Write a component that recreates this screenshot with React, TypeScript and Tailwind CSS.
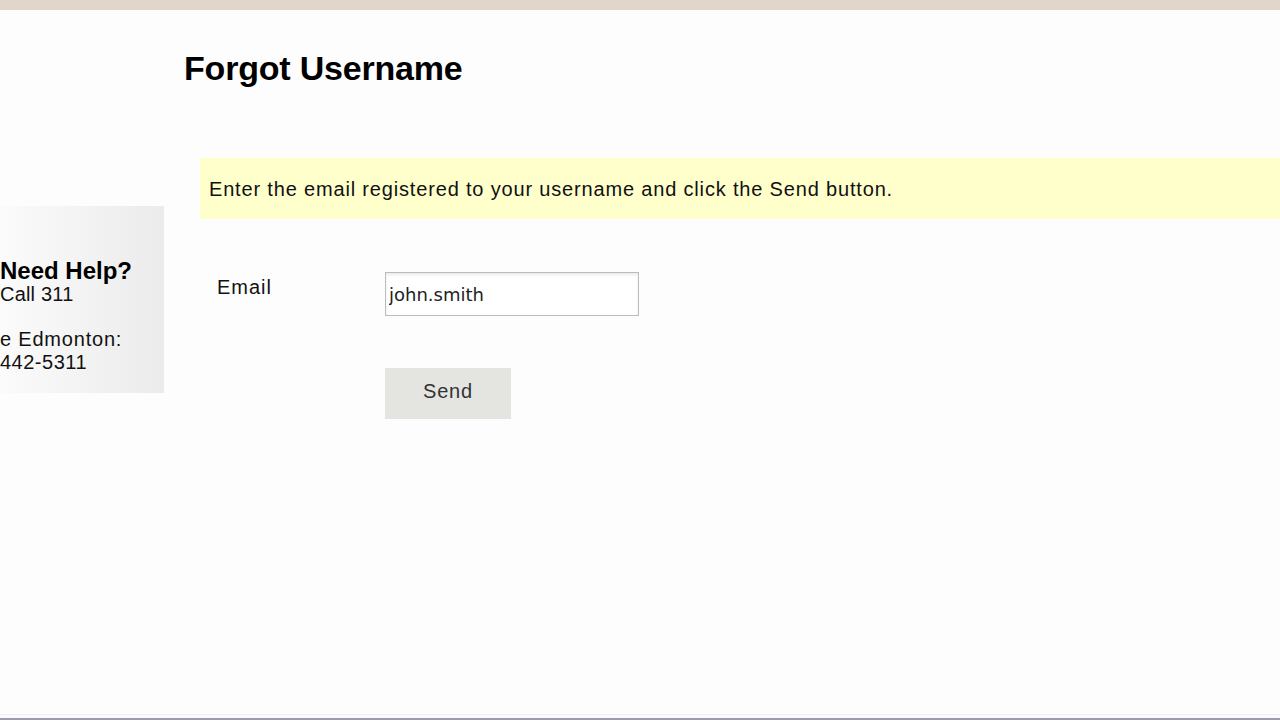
import React from "react";

export default function App() {
  return (
    <div
      className="w-[1280px] h-[720px] bg-[#fdfdfd] flex flex-col overflow-hidden text-[#111]"
      style={{ fontFamily: '"Liberation Sans", Arial, sans-serif' }}
    >
      <div className="h-[10px] bg-[#e1d6c9] shrink-0" />
      <div className="pl-[184px] mt-[38px] h-[40px] flex items-center">
        <h1 className="text-[34px] leading-[40px] font-bold text-black tracking-[-0.2px]">
          Forgot Username
        </h1>
      </div>
      <div className="flex items-start mt-[70px]">
        <div className="w-[164px] h-[187px] mt-[48px] shrink-0 bg-gradient-to-r from-[#fbfbfb] to-[#ebebeb] pt-[52px] overflow-hidden">
          <div className="text-[24px] leading-[25px] font-bold text-black">Need Help?</div>
          <div className="text-[20px] leading-[22.5px] tracking-[0.2px]">Call 311</div>
          <div className="h-[22.5px]" />
          <div className="text-[20px] leading-[22.5px] tracking-[0.8px]">e Edmonton:</div>
          <div className="text-[20px] leading-[22.5px] tracking-[0.5px]">442-5311</div>
        </div>
        <div className="ml-[36px] flex-1 flex flex-col">
          <div className="h-[61px] bg-[#ffffcc] flex items-center pl-[9px] text-[20px] tracking-[0.83px]">
            Enter the email registered to your username and click the Send button.
          </div>
          <div className="flex items-start mt-[53px] pl-[17px]">
            <label className="w-[168px] text-[20px] leading-[30px] tracking-[1px]">Email</label>
            <input
              type="text"
              defaultValue="john.smith"
              className="w-[254px] h-[44px] border border-[#bcbcbc] bg-white pl-[3px] text-[18px] text-[#222] shadow-[inset_0_2px_3px_rgba(0,0,0,0.08)] outline-none"
              style={{ fontFamily: '"DejaVu Sans", sans-serif' }}
            />
          </div>
          <div className="pl-[185px] mt-[52px]">
            <button className="w-[126px] h-[51px] bg-[#e4e5e1] text-[20px] text-[#333] pb-[5px] tracking-[0.8px]">
              Send
            </button>
          </div>
        </div>
      </div>
      <div className="flex-1" />
      <div className="h-[1px] bg-[#eef1ee]" />
      <div className="h-[3px] bg-[#fafbfd]" />
      <div className="h-[2px] bg-[#9d9bab]" />
    </div>
  );
}
